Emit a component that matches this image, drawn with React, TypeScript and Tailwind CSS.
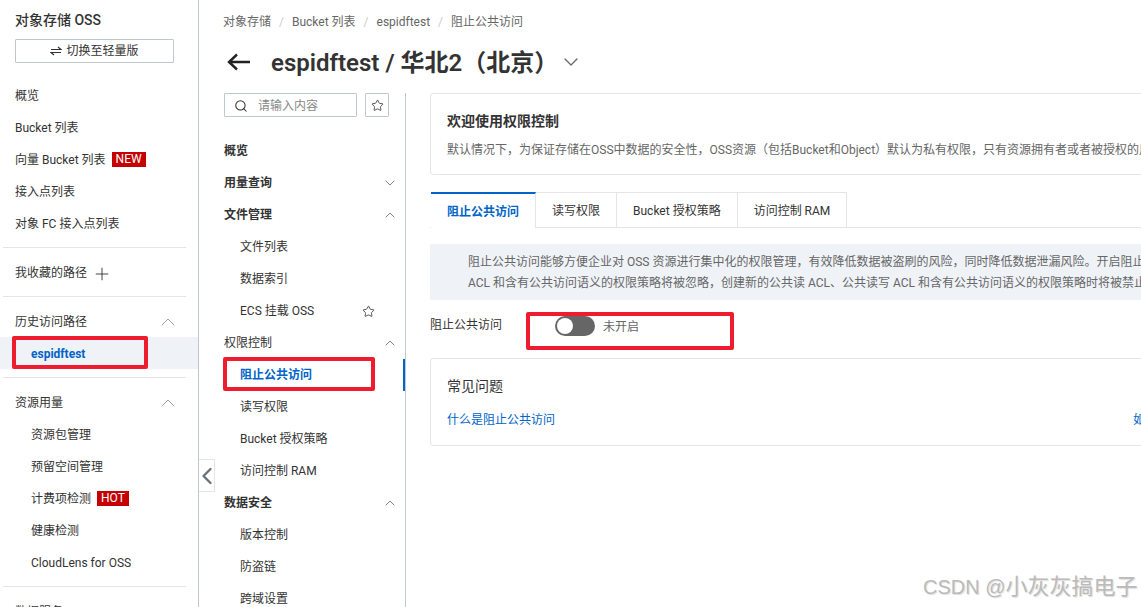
import React from 'react';
import { ChevronDown, ChevronLeft, ChevronUp, Plus, Search, Star } from 'lucide-react';

const font = 'font-["Roboto","Noto_Sans_CJK_SC",sans-serif]';

const RedBox = ({ className }: { className: string }) => (
  <div className={`absolute border-[4px] border-[#ee1c2e] rounded-[2px] pointer-events-none ${className}`} />
);

const Badge = ({ text }: { text: string }) => (
  <span className="ml-[6px] -mt-[1px] bg-[#c40000] text-white text-[12px] leading-[15px] h-[15px] px-[4px]">{text}</span>
);

const SideRow = ({ label, indent, children }: { label: string; indent?: boolean; children?: React.ReactNode }) => (
  <div className={`h-[32px] pt-[2px] flex items-center text-[12px] text-[#333] ${indent ? 'pl-[31px]' : 'pl-[15px]'}`}>
    {label}
    {children}
  </div>
);

const SideDivider = () => <div className="h-px bg-[#e3e5e8] ml-[3px] w-[183px]" />;

const SideGroup = ({ label }: { label: string }) => (
  <div className="h-[32px] pt-[2px] flex items-center justify-between pl-[15px] pr-[18px] text-[12px] text-[#333]">
    {label}
    <ChevronUp size={24} strokeWidth={1} className="text-[#a0a0a0]" />
  </div>
);

const Sidebar = () => (
  <aside className="w-[199px] shrink-0 h-full border-r border-[#c0c6cc] overflow-hidden">
    <div className="h-[39px] pl-[15px] pt-[11px] text-[14px] leading-[18px] font-medium text-[#333]">对象存储 OSS</div>
    <button className="ml-[15px] w-[159px] h-[24px] border border-[#c0c6cc] rounded-[1px] flex items-center justify-center text-[12px] text-[#333]">
      <svg width="12" height="12" viewBox="0 0 12 12" fill="none" stroke="#333" strokeWidth="1.2" className="mr-[4px]">
        <path d="M1 4.5h10L8 2M11 7.5H1L4 10" />
      </svg>
      切换至轻量版
    </button>
    <div className="h-[16px]" />
    <SideRow label="概览" />
    <SideRow label="Bucket 列表" />
    <SideRow label="向量 Bucket 列表">
      <Badge text="NEW" />
    </SideRow>
    <SideRow label="接入点列表" />
    <SideRow label="对象 FC 接入点列表" />
    <div className="h-[8px]" />
    <SideDivider />
    <div className="h-[8px]" />
    <SideRow label="我收藏的路径">
      <Plus size={20} strokeWidth={1.1} className="ml-[5px] mt-[2px] text-[#333]" />
    </SideRow>
    <div className="h-[8px]" />
    <SideDivider />
    <div className="h-[8px]" />
    <SideGroup label="历史访问路径" />
    <div className="h-[32px] pt-[2px] flex items-center pl-[31px] bg-[#eff3f8] text-[12px] font-bold text-[#0064c8]">espidftest</div>
    <div className="h-[8px]" />
    <SideDivider />
    <div className="h-[8px]" />
    <SideGroup label="资源用量" />
    <SideRow label="资源包管理" indent />
    <SideRow label="预留空间管理" indent />
    <SideRow label="计费项检测" indent>
      <Badge text="HOT" />
    </SideRow>
    <SideRow label="健康检测" indent />
    <SideRow label="CloudLens for OSS" indent />
    <div className="h-[8px]" />
    <SideDivider />
    <div className="h-[8px]" />
    <SideRow label="数据服务" />
  </aside>
);

const NavHead = ({ label, open, bold = true }: { label: string; open?: boolean; bold?: boolean }) => (
  <div className={`h-[32px] flex items-center justify-between pr-[7px] text-[12px] text-[#333] ${bold ? 'font-bold' : ''}`}>
    {label}
    {open === true && <ChevronUp size={16} strokeWidth={1.1} className="text-[#555]" />}
    {open === false && <ChevronDown size={16} strokeWidth={1.1} className="text-[#555]" />}
  </div>
);

const NavItem = ({ label, children, active }: { label: string; children?: React.ReactNode; active?: boolean }) => (
  <div className={`h-[32px] flex items-center justify-between pl-[16px] pr-[30px] text-[12px] ${active ? 'font-bold text-[#0064c8] border-r-2 border-[#0064c8]' : 'text-[#333]'}`}>
    {label}
    {children}
  </div>
);

const SecondaryNav = () => (
  <div className="w-[182px] shrink-0 h-full border-r border-[#c0c6cc] overflow-hidden">
    <div className="pr-[16px] flex items-start justify-between">
      <div className="w-[133px] h-[24px] pt-px border border-[#c0c6cc] rounded-[1px] flex items-center pl-[9px] text-[12px] text-[#888]">
        <Search size={14} strokeWidth={1.8} className="text-[#333] mr-[10px]" />
        请输入内容
      </div>
      <div className="w-[24px] h-[24px] border border-[#c0c6cc] rounded-[1px] flex items-center justify-center">
        <Star size={13} strokeWidth={1.5} className="text-[#333]" />
      </div>
    </div>
    <div className="pt-[18px]">
      <NavHead label="概览" />
      <NavHead label="用量查询" open={false} />
      <NavHead label="文件管理" open />
      <NavItem label="文件列表" />
      <NavItem label="数据索引" />
      <NavItem label="ECS 挂载 OSS">
        <Star size={13} strokeWidth={1.5} className="text-[#333]" />
      </NavItem>
      <NavHead label="权限控制" open bold={false} />
      <NavItem label="阻止公共访问" active />
      <NavItem label="读写权限" />
      <NavItem label="Bucket 授权策略" />
      <NavItem label="访问控制 RAM" />
      <NavHead label="数据安全" open />
      <NavItem label="版本控制" />
      <NavItem label="防盗链" />
      <NavItem label="跨域设置" />
    </div>
  </div>
);

const tabs = ['阻止公共访问', '读写权限', 'Bucket 授权策略', '访问控制 RAM'];

const Tabs = () => (
  <div className="mt-[17px] h-[36px] flex border-b border-[#e3e5e8] pl-px">
    {tabs.map((t, i) => (
      <div
        key={t}
        className={
          i === 0
            ? 'h-[36px] px-[16px] pt-px flex items-center text-[12px] font-bold text-[#0064c8] border-t-2 border-[#0064c8] border-r border-r-[#e3e5e8] bg-white'
            : 'h-[35px] px-[16px] pt-[2px] flex items-center text-[12px] text-[#333] border-t border-r border-[#e3e5e8]'
        }
      >
        {t}
      </div>
    ))}
  </div>
);

const Content = () => (
  <div className="flex-1 min-w-0 pl-[24px] overflow-hidden">
    <div className="w-[900px]">
      <div className="h-[82px] border border-[#e3e5e8] rounded-[3px] pl-[16px] pt-[17px]">
        <div className="text-[14px] leading-[20px] font-bold text-[#333]">欢迎使用权限控制</div>
        <p className="mt-[10px] text-[12px] leading-[18px] text-[#666] whitespace-nowrap">
          默认情况下，为保证存储在OSS中数据的安全性，OSS资源（包括Bucket和Object）默认为私有权限，只有资源拥有者或者被授权的用户才能访问。
        </p>
      </div>
      <Tabs />
      <div className="mt-[16px] h-[56px] bg-[#eff3f8] rounded-[2px] pl-[38px] pt-[8px] text-[12px] leading-[21px] text-[#666] whitespace-nowrap">
        <p>阻止公共访问能够方便企业对 OSS 资源进行集中化的权限管理，有效降低数据被盗刷的风险，同时降低数据泄漏风险。开启阻止公共访问后</p>
        <p>ACL 和含有公共访问语义的权限策略将被忽略，创建新的公共读 ACL、公共读写 ACL 和含有公共访问语义的权限策略时将被禁止。</p>
      </div>
      <div className="mt-[16px] h-[22px] flex items-start">
        <div className="w-[125px] text-[12px] leading-[18px] text-[#333]">阻止公共访问</div>
        <div className="relative w-[40px] h-[20px] rounded-full bg-[#666]">
          <div className="absolute left-[2px] top-[2px] w-[16px] h-[16px] rounded-full bg-white" />
        </div>
        <div className="ml-[8px] pt-px text-[12px] leading-[20px] text-[#666]">未开启</div>
      </div>
      <div className="mt-[20px] h-[88px] border border-[#e3e5e8] rounded-[3px] pl-[16px] pt-[17px]">
        <div className="text-[14px] leading-[20px] text-[#333]">常见问题</div>
        <div className="mt-[15px] flex text-[12px] leading-[18px] text-[#0064c8]">
          <span className="w-[686px]">什么是阻止公共访问</span>
          <span>如何开启阻止公共访问</span>
        </div>
      </div>
    </div>
  </div>
);

export default function App() {
  return (
    <div className={`relative w-[1141px] h-[607px] flex overflow-hidden bg-white ${font}`}>
      <Sidebar />
      <div className="flex-1 min-w-0 h-full flex flex-col pl-[25px]">
        <div className="h-[43px] -ml-px flex items-center text-[12px] text-[#666]">
          对象存储
          <span className="mx-[8px] text-[#ccc]">/</span>
          Bucket 列表
          <span className="mx-[8px] text-[#ccc]">/</span>
          espidftest
          <span className="mx-[8px] text-[#ccc]">/</span>
          阻止公共访问
        </div>
        <div className="h-[38px] flex items-center">
          <svg width="24" height="18" viewBox="0 0 24 18" fill="none" stroke="#222" strokeWidth="2.4" className="ml-[3px]">
            <path d="M2 9h21M10 1.5 2 9l8 7.5" />
          </svg>
          <span className="ml-[20px] pt-px text-[24px] font-semibold text-[#333]">espidftest / 华北2（北京）</span>
          <ChevronDown size={24} strokeWidth={1.3} className="ml-[1px] text-[#666]" />
        </div>
        <div className="h-[12px] shrink-0" />
        <div className="flex-1 min-h-0 flex">
          <SecondaryNav />
          <Content />
        </div>
      </div>
      <div className="absolute left-[199px] top-[459px] w-[16px] h-[33px] bg-white border border-l-0 border-[#e3e5e8] flex items-center justify-center">
        <ChevronLeft size={28} strokeWidth={2} className="shrink-0 text-[#67727e]" />
      </div>
      <RedBox className="left-[12px] top-[336px] w-[136px] h-[33px]" />
      <RedBox className="left-[223px] top-[357px] w-[152px] h-[34px]" />
      <RedBox className="left-[526px] top-[312px] w-[208px] h-[38px]" />
      <div className="absolute left-[923px] top-[572px] text-[20px] leading-[30px] text-[#bbb] font-['Liberation_Sans','Noto_Sans_CJK_SC',sans-serif] [text-shadow:1px_1px_1px_#ddd] whitespace-nowrap">
        CSDN @<span className="text-[22px]">小灰灰搞电子</span>
      </div>
    </div>
  );
}
